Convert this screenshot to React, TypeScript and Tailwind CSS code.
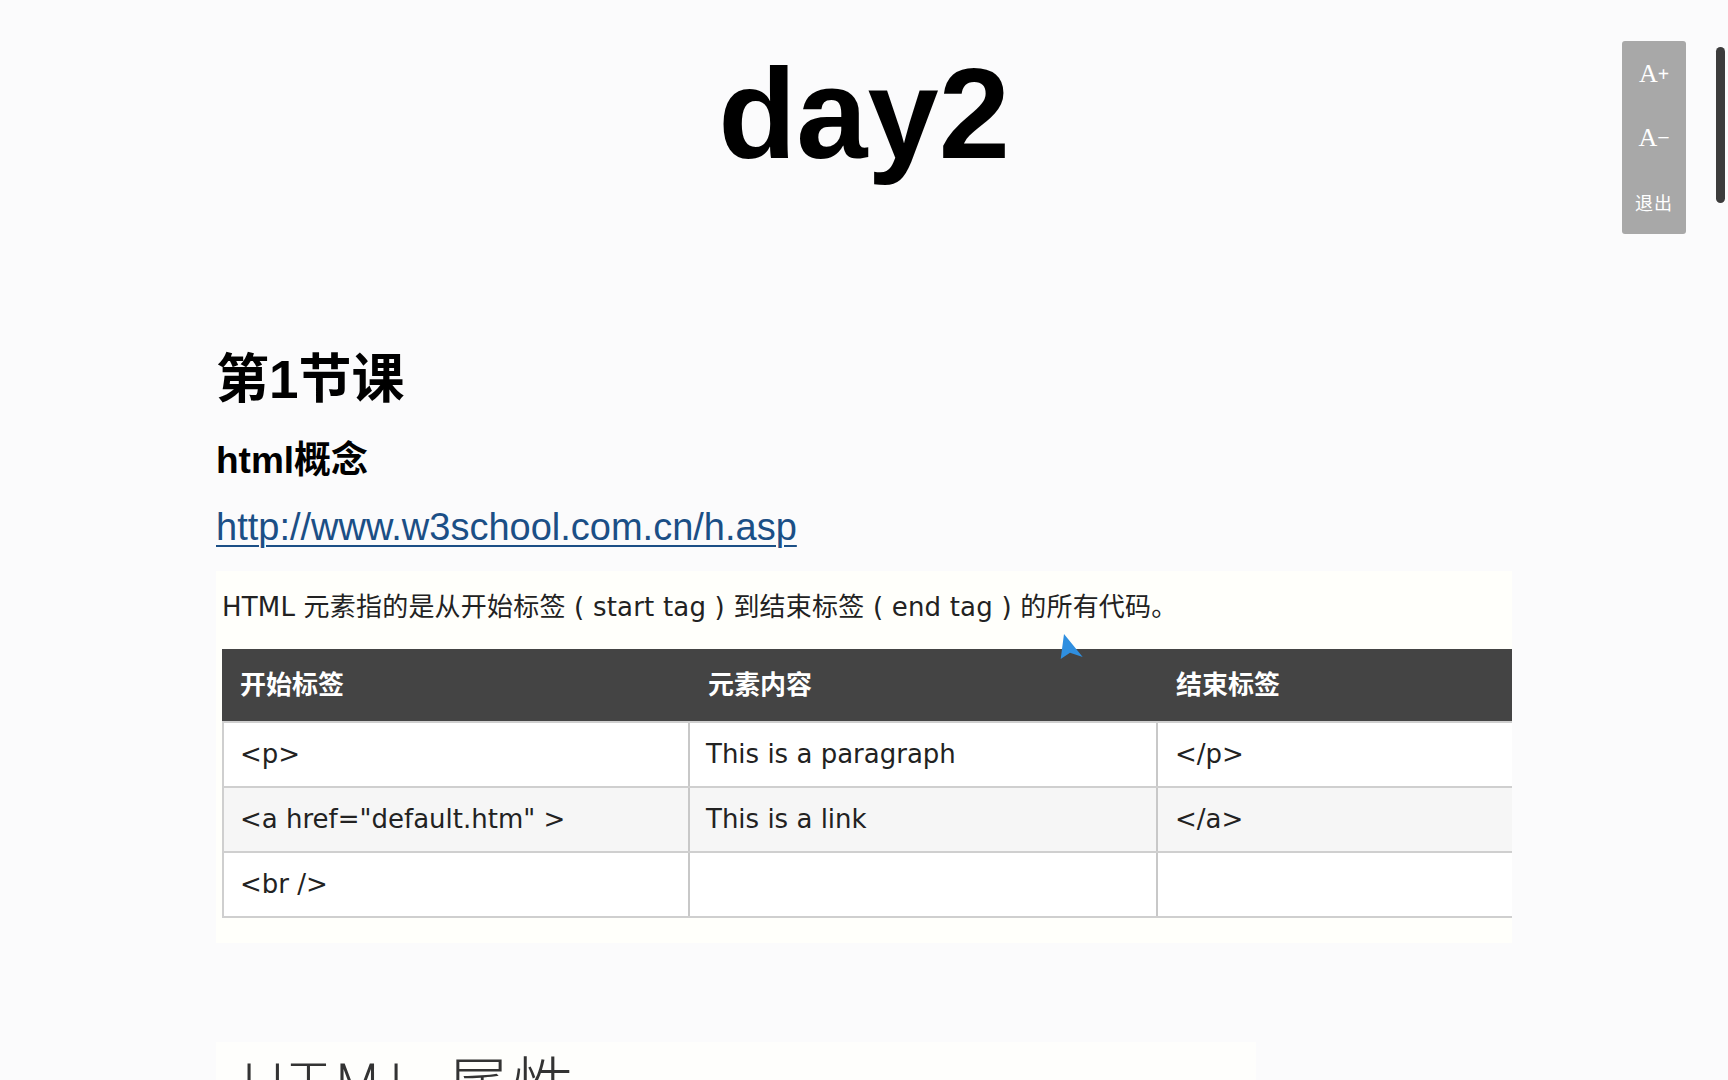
const sans = "font-['Liberation_Sans','Noto_Sans_CJK_SC',sans-serif]";
const ms = "font-['DejaVu_Sans','Noto_Sans_CJK_SC',sans-serif]";

const rows = [
  { a: "<p>", b: "This is a paragraph", c: "</p>", bg: "bg-white" },
  { a: '<a href="default.htm" >', b: "This is a link", c: "</a>", bg: "bg-[#f6f6f6]" },
  { a: "<br />", b: "", c: "", bg: "bg-white" },
];

function Cursor() {
  return (
    <svg className="absolute left-[1056px] top-[630px]" width="30" height="32" viewBox="0 0 30 32">
      <polygon points="8,4 26.7,27 14,22.7 4.7,29" fill="#2f8fe0" />
    </svg>
  );
}

function SidePanel() {
  return (
    <div className="absolute left-[1622px] top-[41px] w-[64px] h-[193px] rounded-[3px] bg-[#a8a8a8] flex flex-col items-center text-white">
      <div className="mt-[18px] h-[30px] flex items-center font-['Liberation_Serif',serif] text-[26px] leading-none">
        A<span className="text-[20px] font-bold">+</span>
      </div>
      <div className="mt-[34px] h-[30px] flex items-center font-['Liberation_Serif',serif] text-[26px] leading-none">
        A<span className="text-[22px]">−</span>
      </div>
      <div className="mt-[40px] font-['Noto_Sans_CJK_SC',sans-serif] text-[18px] leading-none tracking-[1px]">退出</div>
    </div>
  );
}

export default function App() {
  return (
    <div className="relative w-full h-[1080px] overflow-hidden bg-[#fbfbfc] text-black">
      <div className="mx-auto w-[1296px] flex flex-col">
        <h1 className={`${sans} mt-[50px] text-center text-[128px] font-bold leading-none`}>day2</h1>

        <h2 className={`${sans} mt-[171px] text-[53px] font-bold leading-[62px]`}>第1节课</h2>
        <h3 className={`${sans} mt-[28px] text-[37px] font-bold leading-[43px]`}>html概念</h3>
        <a className={`${sans} mt-[23px] self-start text-[38px] leading-[44px] text-[#1b4f86] underline underline-offset-[5px] decoration-[2px]`}>
          http://www.w3school.com.cn/h.asp
        </a>

        <div className="mt-[22px] bg-[#fffffb] pl-[6px] pt-[18px] pb-[25px]">
          <p className={`${ms} text-[26px] leading-[36px] text-[#222] tracking-[0.2px]`}>
            HTML 元素指的是从开始标签 ( start tag ) 到结束标签 ( end tag ) 的所有代码。
          </p>
          <div className={`${ms} mt-[24px] w-[1290px] text-[26px]`}>
            <div className="flex h-[74px] items-center bg-[#444] text-white font-bold border-b-2 border-[#cfcfcf]">
              <div className="w-[468px] pl-[18px]">开始标签</div>
              <div className="w-[468px] pl-[18px]">元素内容</div>
              <div className="flex-1 pl-[18px]">结束标签</div>
            </div>
            {rows.map((r, i) => (
              <div key={i} className={`flex h-[65px] ${r.bg} text-[#222] border-b-2 border-[#cfcfcf] border-l-2`}>
                <div className="w-[466px] pl-[16px] flex items-center border-r-2 border-[#c8c8c8]">{r.a}</div>
                <div className="w-[468px] pl-[16px] flex items-center border-r-2 border-[#c8c8c8]">{r.b}</div>
                <div className="flex-1 pl-[17px] flex items-center">{r.c}</div>
              </div>
            ))}
          </div>
        </div>

        <div className="mt-[99px] w-[1040px] bg-[#fefefc] pl-[24px] pt-[9px] h-[80px]">
          <div className={`${ms} text-[62px] leading-[74px] text-[#333] font-light tracking-[3px]`}>HTML 属性</div>
        </div>
      </div>

      <Cursor />
      <SidePanel />
      <div className="absolute left-[1716px] top-[47px] w-[9px] h-[156px] rounded-full bg-[#3c3c3c]" />
    </div>
  );
}
